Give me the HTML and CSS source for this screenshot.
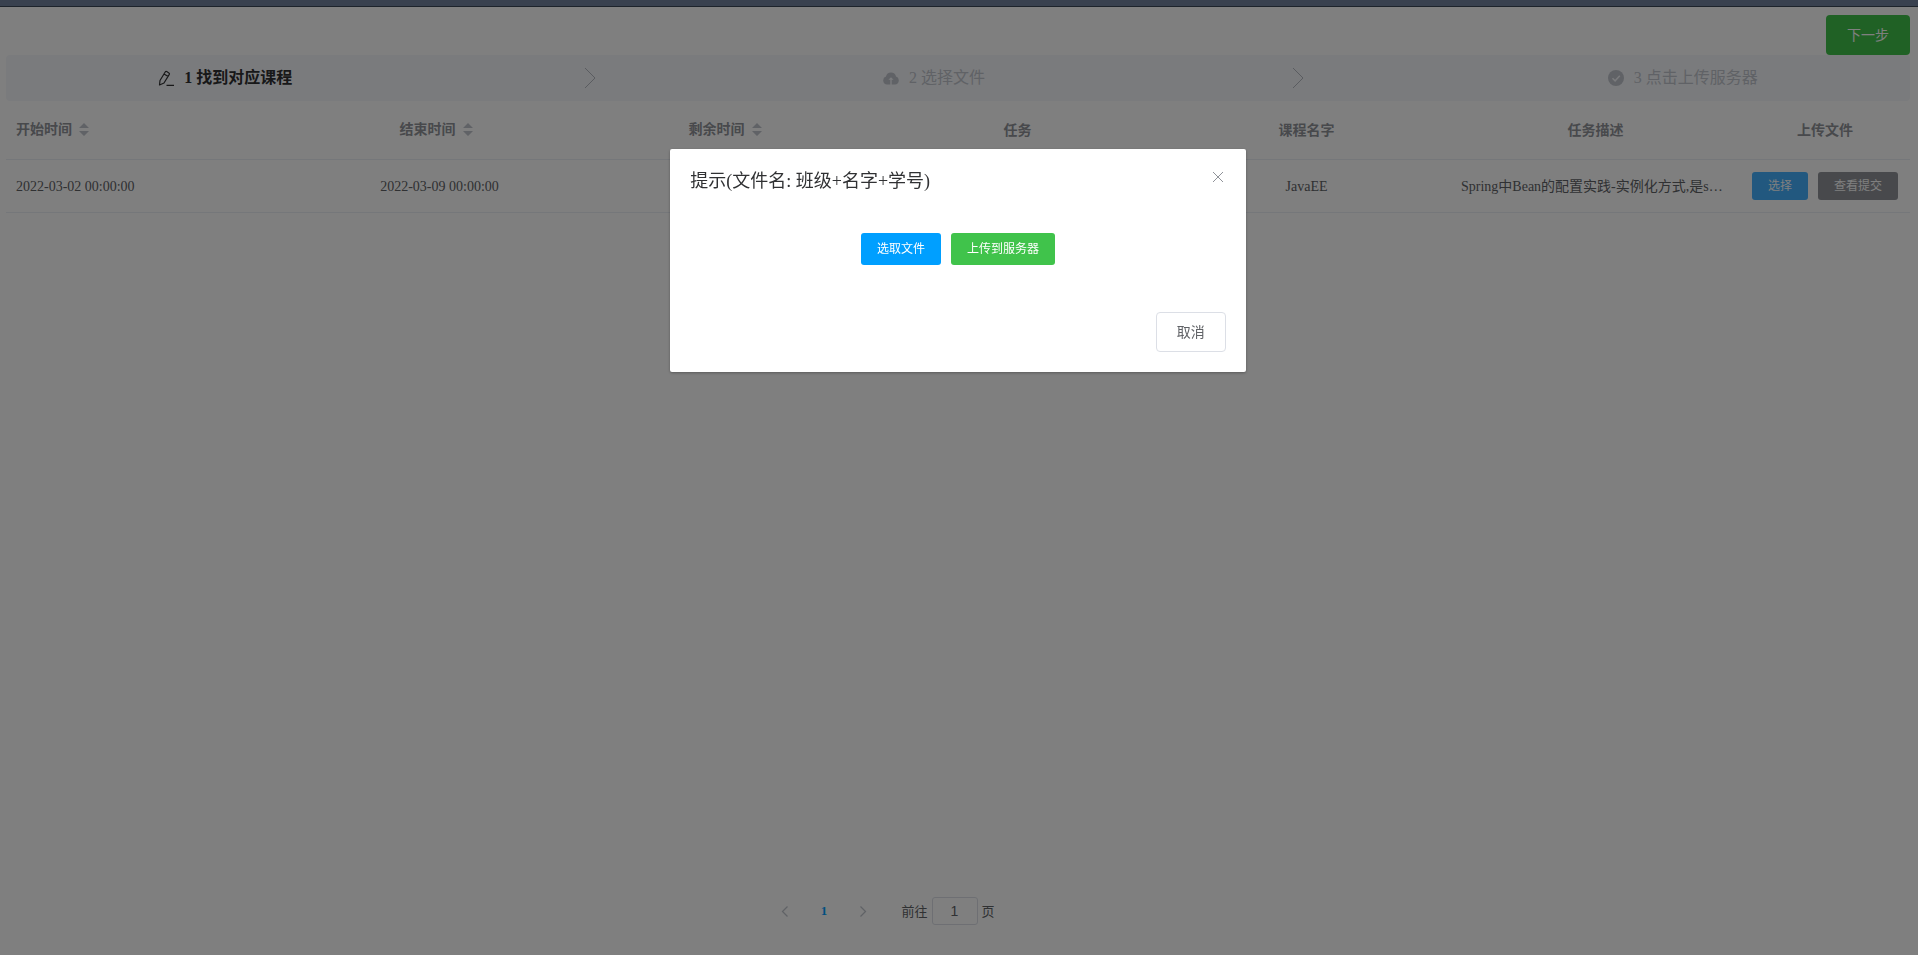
FILE: index.html
```html
<!DOCTYPE html>
<html lang="zh-CN">

<head>
  <meta charset="UTF-8">
  <meta name="viewport" content="width=device-width, initial-scale=1.0">
  <title>作业提交</title>
  <link rel="stylesheet" href="styles.css">
</head>

<body>
  <div class="topbar"></div>

  <main class="container">
    <div class="toolbar">
      <button type="button" class="btn btn-success">下一步</button>
    </div>

    <!-- 步骤条 -->
    <ol class="steps">
      <li class="step active">
        <svg class="step-icon" viewBox="0 0 16 16"><path class="pencil" d="M1.500 15L2 10.500 7.200 2q.6-.9 1.500-.4l2.200 1.300q.9.600.4 1.500L6 13zM6 4l4.200 2.600M8.500 15.400H16"/></svg>
        <span class="step-title">1 找到对应课程</span>
        <svg class="step-arrow" viewBox="0 0 12 22"><path d="M1 1l10 10L1 21"/></svg>
      </li>
      <li class="step">
        <svg class="step-icon" viewBox="0 0 16 16"><path fill="currentColor" fill-rule="evenodd" d="M7.300 14.400H4A4 4 0 0 1 3 6.600a5.100 5.100 0 0 1 10 0 4 4 0 0 1-1 7.800H8.700V9.800h1.900L8 7.200 5.400 9.800h1.900z"/></svg>
        <span class="step-title">2 选择文件</span>
        <svg class="step-arrow" viewBox="0 0 12 22"><path d="M1 1l10 10L1 21"/></svg>
      </li>
      <li class="step">
        <svg class="step-icon" viewBox="0 0 16 16"><circle cx="8" cy="8" r="8" fill="currentColor"/><path class="tick" d="M4.500 8.200l2.600 2.600 4.700-5"/></svg>
        <span class="step-title">3 点击上传服务器</span>
      </li>
    </ol>

    <!-- 任务列表 -->
    <table class="table">
      <colgroup>
        <col><col><col><col><col><col>
        <col class="col-action">
      </colgroup>
      <thead>
        <tr>
          <th class="left">
            <span class="sort">开始时间<svg viewBox="0 0 24 16"><path d="M7 7l5-5 5 5zM7 10l5 5 5-5z"/></svg></span>
          </th>
          <th><span class="sort">结束时间<svg viewBox="0 0 24 16"><path d="M7 7l5-5 5 5zM7 10l5 5 5-5z"/></svg></span></th>
          <th><span class="sort">剩余时间<svg viewBox="0 0 24 16"><path d="M7 7l5-5 5 5zM7 10l5 5 5-5z"/></svg></span></th>
          <th>任务</th>
          <th>课程名字</th>
          <th>任务描述</th>
          <th>上传文件</th>
        </tr>
      </thead>
      <tbody>
        <tr>
          <td class="left">2022-03-02 00:00:00</td>
          <td>2022-03-09 00:00:00</td>
          <td></td>
          <td></td>
          <td>JavaEE</td>
          <td class="left">Spring中Bean的配置实践-实例化方式,是s…</td>
          <td class="action">
            <div class="btns">
              <button type="button" class="btn btn-mini btn-primary">选择</button>
              <button type="button" class="btn btn-mini btn-info">查看提交</button>
            </div>
          </td>
        </tr>
      </tbody>
    </table>

    <!-- 分页 -->
    <nav class="pagination">
      <button type="button" class="page" aria-label="上一页"><svg viewBox="0 0 8 12"><path d="M6 2L2 6l4 4"/></svg></button>
      <button type="button" class="page current">1</button>
      <button type="button" class="page" aria-label="下一页"><svg viewBox="0 0 8 12"><path d="M2 2l4 4-4 4"/></svg></button>
      <label class="jump"><span>前往</span><input type="text" value="1"><span>页</span></label>
    </nav>
  </main>

  <!-- 上传弹窗 -->
  <div class="mask">
    <div class="dialog" role="dialog" aria-labelledby="dialog-title">
      <div class="dialog-header">
        <h2 id="dialog-title">提示(文件名: 班级+名字+学号)</h2>
        <button type="button" class="close" aria-label="关闭"><svg viewBox="0 0 12 12"><path d="M1 1l10 10M11 1L1 11"/></svg></button>
      </div>
      <div class="dialog-body">
        <button type="button" class="btn btn-small btn-primary">选取文件</button>
        <button type="button" class="btn btn-small btn-success">上传到服务器</button>
      </div>
      <div class="dialog-footer">
        <button type="button" class="btn btn-default">取消</button>
      </div>
    </div>
  </div>
</body>

</html>
```

FILE: styles.css
```css
* {
  box-sizing: border-box;
}

body {
  display: flex;
  flex-direction: column;
  min-height: 100vh;
  margin: 0;
  font-family: "Liberation Serif", "Noto Sans CJK SC", serif;
  color: #606266;
  background: #fff;
}

.topbar {
  height: 7px;
  background: #73829f;
  border-bottom: 1px solid #3a4656;
}

.container {
  display: flex;
  flex-direction: column;
  flex: 1;
  padding: 8px 8px 0 6px;
}

.toolbar {
  display: flex;
  justify-content: flex-end;
}

/* 按钮 */
.btn {
  height: 40px;
  padding: 0 20px 2px;
  border: 1px solid transparent;
  border-radius: 4px;
  font-family: "Noto Sans CJK SC", sans-serif;
  font-size: 14px;
  line-height: 14px;
  color: #fff;
}

.btn-small {
  height: 32px;
  padding: 0 15px 2px;
  border-radius: 3px;
  font-size: 12px;
}

.btn-mini {
  height: 28px;
  padding: 0 15px 2px;
  border-radius: 3px;
  font-size: 12px;
}

.btn-primary {
  background: #009fff;
}

.btn-mini.btn-primary {
  background: #44b0fe;
}

.btn-success {
  background: #40c34b;
}

.btn-info {
  background: #909399;
}

.btn-default {
  background: #fff;
  border-color: #dcdfe6;
  color: #606266;
}

.btns {
  display: flex;
  justify-content: center;
  gap: 10px;
}

/* 步骤条 */
.steps {
  display: flex;
  margin: 0;
  padding: 11px 8%;
  list-style: none;
  border-radius: 4px;
  background: #f5f7fa;
}

.step {
  display: flex;
  align-items: center;
  flex: 1;
  height: 24px;
  font-size: 16px;
  color: #c0c4cc;
}

.step:last-child {
  flex: none;
}

.step.active {
  font-weight: bold;
  color: #303133;
}

.step-icon {
  width: 16px;
  height: 16px;
  margin-right: 10px;
}

.step-title {
  padding-bottom: 4px;
}

.step-icon .pencil {
  fill: none;
  stroke: currentColor;
  stroke-width: 1.2;
  stroke-linejoin: round;
}

.step-icon .tick {
  fill: none;
  stroke: #f5f7fa;
  stroke-width: 1.5;
}

.step-arrow {
  width: 16px;
  height: 22px;
  margin: 0 auto;
  padding-left: 4px;
  fill: none;
  stroke: #b4b8c0;
}

/* 表格 */
.table {
  width: 100%;
  table-layout: fixed;
  border-collapse: collapse;
  font-size: 14px;
  line-height: 23px;
}

.col-action {
  width: 170px;
}

.table th,
.table td {
  padding: 1px 10px 0;
  border-bottom: 1px solid #ebeef5;
  text-align: center;
  white-space: nowrap;
  overflow: hidden;
  text-overflow: ellipsis;
}

.table th {
  height: 58px;
  color: #909399;
}

.table td {
  height: 53px;
}

.table .left {
  text-align: left;
}

.table .action {
  padding: 0;
}

.sort {
  display: inline-flex;
  align-items: center;
  padding-bottom: 2px;
}

.sort svg {
  width: 24px;
  height: 16px;
  fill: #c0c4cc;
}

/* 分页 */
.pagination {
  display: flex;
  align-items: center;
  justify-content: center;
  margin-top: auto;
  padding: 0 156px 30px 0;
  font-size: 13px;
}

.page {
  width: 39px;
  height: 28px;
  padding: 0;
  border: 0;
  background: none;
  font-family: inherit;
  font-size: 13px;
  font-weight: bold;
}

.page svg {
  display: block;
  width: 10px;
  height: 15px;
  margin: 0 auto;
  fill: none;
  stroke: #c0c4cc;
}

.page.current {
  color: #009fff;
}

.jump {
  display: flex;
  align-items: center;
  gap: 4px;
  margin-left: 19px;
}

.jump span {
  padding-bottom: 2px;
}

.jump input {
  width: 46px;
  height: 28px;
  padding: 0;
  border: 1px solid #dcdfe6;
  border-radius: 3px;
  font-family: "Liberation Sans", sans-serif;
  font-size: 14px;
  text-align: center;
  color: #606266;
}

/* 弹窗 */
.mask {
  position: fixed;
  inset: 0;
  padding: 149px 2px 0 0;
  background: rgba(0, 0, 0, 0.5);
}

.dialog {
  width: 30vw;
  margin: 0 auto;
  border-radius: 2px;
  background: #fff;
  box-shadow: 0 1px 3px rgba(0, 0, 0, 0.3);
}

.dialog-header {
  display: flex;
  justify-content: space-between;
  padding: 20px 20px 10px;
}

.dialog-header h2 {
  margin: 0;
  font-size: 18px;
  font-weight: normal;
  line-height: 24px;
  color: #303133;
}

.close {
  width: 16px;
  height: 16px;
  padding: 0;
  border: 0;
  background: none;
}

.close svg {
  display: block;
  width: 12px;
  height: 12px;
  margin: 2px;
  fill: none;
  stroke: #909399;
}

.dialog-body {
  display: flex;
  justify-content: center;
  gap: 10px;
  padding: 30px 20px 37px;
}

.dialog-footer {
  padding: 10px 20px 20px;
  text-align: right;
}

.dialog-footer .btn {
  vertical-align: top;
}
```
